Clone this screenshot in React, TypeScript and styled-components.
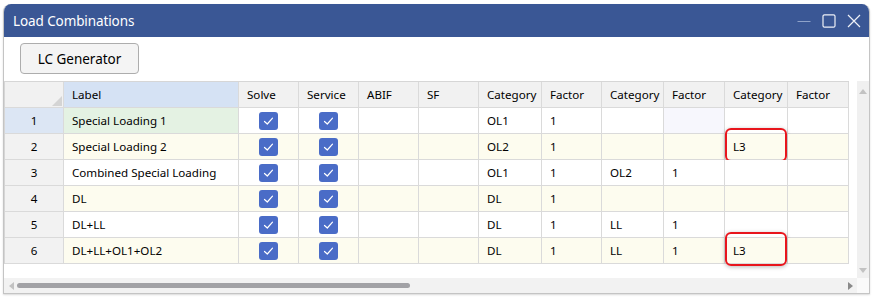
import React from "react";
import styled, { createGlobalStyle } from "styled-components";

const Global = createGlobalStyle`
  html, body { margin: 0; padding: 0; background: #ffffff; }
  body { font-family: "Noto Sans", "Open Sans", sans-serif; color: #000; }
  * { box-sizing: border-box; }
`;

const Page = styled.div`
  width: 876px;
  height: 298px;
  padding: 4px 0 0 3px;
  overflow: hidden;
  background: #ffffff;
`;

const Window = styled.div`
  width: 867px;
  height: 290px;
  display: flex;
  flex-direction: column;
  border: 1px solid #c4c4c4;
  border-top: none;
  border-radius: 8px 8px 0 0;
  overflow: hidden;
  background: #fff;
  box-shadow: 0 1px 2px rgba(0, 0, 0, 0.15);
`;

const TitleBar = styled.div`
  height: 33px;
  flex: none;
  background: #3a5795;
  display: flex;
  align-items: center;
  justify-content: space-between;
  padding: 0 9px 0 10px;
  margin: 0 -1px;
`;

const Title = styled.div`
  color: #ffffff;
  font-size: 13.5px;
  letter-spacing: -0.1px;
`;

const Controls = styled.div`
  display: flex;
  align-items: center;
  gap: 11px;
`;

const Toolbar = styled.div`
  height: 44px;
  flex: none;
  padding: 6px 0 0 16px;
`;

const Button = styled.button`
  width: 119px;
  height: 31px;
  border: 1px solid #adadad;
  border-radius: 4px;
  background: #f4f4f4;
  font-family: inherit;
  font-size: 13.5px;
  color: #000;
  padding: 0;
`;

const GridArea = styled.div`
  flex: 1;
  display: grid;
  grid-template-columns: 1fr 12px;
  grid-template-rows: 1fr 15px;
  min-height: 0;
`;

const Viewport = styled.div`
  overflow: hidden;
  background: #fff;
`;

const Table = styled.div`
  display: grid;
  grid-template-columns: 59px 175px 60px 60px 60px 60px 63px 60px 62px 61px 63px 61px;
  grid-auto-rows: 26px;
  border-left: 1px solid #d6d6d6;
  border-top: 1px solid #d6d6d6;
  width: max-content;
`;

const Cell = styled.div<{ $bg?: string; $center?: boolean }>`
  position: relative;
  background: ${(p) => p.$bg || "#ffffff"};
  border-right: 1px solid #dadada;
  border-bottom: 1px solid #dadada;
  display: flex;
  align-items: center;
  justify-content: ${(p) => (p.$center ? "center" : "flex-start")};
  padding: ${(p) => (p.$center ? "0" : "0 0 0 8px")};
  font-size: 11.6px;
  color: #000;
  white-space: nowrap;
`;

const HeadCell = styled(Cell)`
  background: ${(p) => p.$bg || "#f1f1f1"};
`;

const Corner = styled.svg`
  position: absolute;
  right: 1px;
  bottom: 1px;
`;

const Highlight = styled.div`
  position: absolute;
  top: -6px;
  bottom: -3px;
  left: 0px;
  right: 0px;
  border: 2px solid #e8151c;
  border-radius: 6px;
  box-shadow: 0 1px 4px rgba(0, 0, 0, 0.28);
  pointer-events: none;
`;

const VScroll = styled.div`
  background: #f0f0f0;
  display: flex;
  flex-direction: column;
  justify-content: space-between;
  align-items: center;
  padding: 8px 0 5px;
`;

const HScroll = styled.div`
  background: #f2f2f2;
  display: flex;
  align-items: center;
  padding: 0 0 0 5px;
`;

const Thumb = styled.div`
  width: 393px;
  height: 5px;
  border-radius: 2.5px;
  background: #a2a2a6;
  margin-left: 3px;
`;

const RightArrow = styled.svg`
  margin-left: auto;
  margin-right: 4px;
`;

const ScrollCorner = styled.div`
  background: #fafafa;
`;

const Check = () => (
  <svg width="19" height="18" viewBox="0 0 19 18">
    <rect x="0" y="0" width="19" height="18" rx="3" fill="#4a6cc7" />
    <polyline points="5.5,9.5 8.3,12 13.5,6.2" fill="none" stroke="#ffffff" strokeWidth="1.2" strokeLinecap="round" strokeLinejoin="round" />
  </svg>
);

type Row = {
  n: number;
  label: string;
  c1: string;
  f1: string;
  c2: string;
  f2: string;
  c3: string;
  hl?: boolean;
};

const rows: Row[] = [
  { n: 1, label: "Special Loading 1", c1: "OL1", f1: "1", c2: "", f2: "", c3: "" },
  { n: 2, label: "Special Loading 2", c1: "OL2", f1: "1", c2: "", f2: "", c3: "L3", hl: true },
  { n: 3, label: "Combined Special Loading", c1: "OL1", f1: "1", c2: "OL2", f2: "1", c3: "" },
  { n: 4, label: "DL", c1: "DL", f1: "1", c2: "", f2: "", c3: "" },
  { n: 5, label: "DL+LL", c1: "DL", f1: "1", c2: "LL", f2: "1", c3: "" },
  { n: 6, label: "DL+LL+OL1+OL2", c1: "DL", f1: "1", c2: "LL", f2: "1", c3: "L3", hl: true },
];

const headers = ["Solve", "Service", "ABIF", "SF", "Category", "Factor", "Category", "Factor", "Category", "Factor"];

export default function App() {
  return (
    <>
      <Global />
      <Page>
        <Window>
          <TitleBar>
            <Title>Load Combinations</Title>
            <Controls>
              <svg width="14" height="14" viewBox="0 0 14 14">
                <line x1="0.5" y1="7.5" x2="13.5" y2="7.5" stroke="#8ea2c9" strokeWidth="1.2" />
              </svg>
              <svg width="14" height="14" viewBox="0 0 14 14">
                <rect x="1" y="0.8" width="12" height="12.4" rx="1.5" fill="none" stroke="#eef1f7" strokeWidth="1.2" />
              </svg>
              <svg width="14" height="14" viewBox="0 0 14 14">
                <path d="M1 1 L13 13 M13 1 L1 13" stroke="#eef1f7" strokeWidth="1.2" />
              </svg>
            </Controls>
          </TitleBar>
          <Toolbar>
            <Button>LC Generator</Button>
          </Toolbar>
          <GridArea>
            <Viewport>
              <Table>
                <HeadCell>
                  <Corner width="10" height="10" viewBox="0 0 10 10">
                    <polygon points="10,0 10,10 0,10" fill="#d4d4d4" />
                  </Corner>
                </HeadCell>
                <HeadCell $bg="#d5e2f4">Label</HeadCell>
                {headers.map((h, i) => (
                  <HeadCell key={i}>{h}</HeadCell>
                ))}
                {rows.map((r) => {
                  const alt = r.n % 2 === 0;
                  const bg = alt ? "#fdfcef" : "#ffffff";
                  return (
                    <React.Fragment key={r.n}>
                      <HeadCell $center $bg={r.n === 1 ? "#dce6f4" : "#f2f2f2"}>{r.n}</HeadCell>
                      <Cell $bg={r.n === 1 ? "#e4f2e3" : bg}>{r.label}</Cell>
                      <Cell $center $bg={bg}><Check /></Cell>
                      <Cell $center $bg={bg}><Check /></Cell>
                      <Cell $bg={bg} />
                      <Cell $bg={bg} />
                      <Cell $bg={bg}>{r.c1}</Cell>
                      <Cell $bg={bg}>{r.f1}</Cell>
                      <Cell $bg={bg}>{r.c2}</Cell>
                      <Cell $bg={r.n === 1 ? "#f7f7fd" : bg}>{r.f2}</Cell>
                      <Cell $bg={bg}>
                        {r.c3}
                        {r.hl && <Highlight />}
                      </Cell>
                      <Cell $bg={bg} />
                    </React.Fragment>
                  );
                })}
              </Table>
            </Viewport>
            <VScroll>
              <svg width="8" height="5" viewBox="0 0 8 5">
                <polygon points="0,5 8,5 4,0" fill="#c2c2c2" />
              </svg>
              <svg width="8" height="5" viewBox="0 0 8 5">
                <polygon points="0,0 8,0 4,5" fill="#c2c2c2" />
              </svg>
            </VScroll>
            <HScroll>
              <svg width="5" height="8" viewBox="0 0 5 8">
                <polygon points="5,0 5,8 0,4" fill="#c2c2c2" />
              </svg>
              <Thumb />
              <RightArrow width="5" height="8" viewBox="0 0 5 8">
                <polygon points="0,0 0,8 5,4" fill="#8a8a8a" />
              </RightArrow>
            </HScroll>
            <ScrollCorner />
          </GridArea>
        </Window>
      </Page>
    </>
  );
}
